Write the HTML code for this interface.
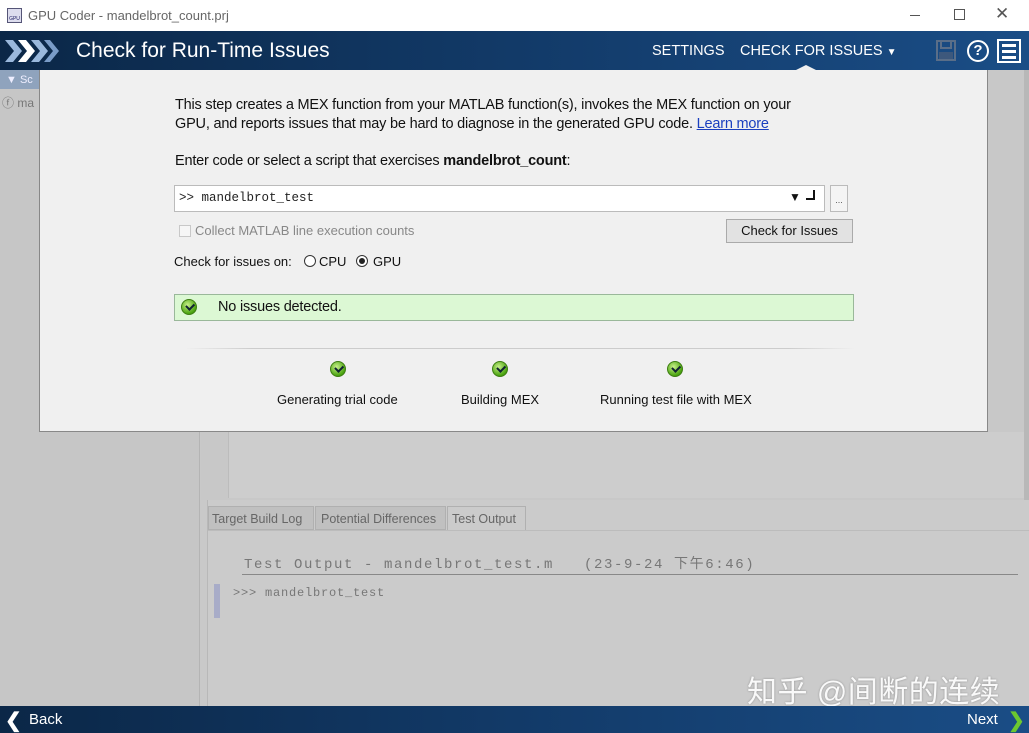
<!DOCTYPE html>
<html><head><meta charset="utf-8"><style>
*{box-sizing:border-box;margin:0;padding:0}
body{width:1029px;height:733px;overflow:hidden;position:relative;background:#c9c9c9;font-family:"Liberation Sans","Noto Sans CJK SC",sans-serif;}
.abs{position:absolute}
#title{left:0;top:0;width:1029px;height:31px;background:#fff;}
#title .t{left:28px;top:8px;font-size:13px;color:#666}
#hdr{left:0;top:31px;width:1029px;height:39px;background:linear-gradient(90deg,#0b2747 0%,#123a68 50%,#1a4d86 100%);}
#side{left:0;top:70px;width:200px;height:636px;background:#c6c6c6;border-right:1px solid #b4b4b4}
#dlg{left:39px;top:70px;width:949px;height:362px;background:#f0f0f0;border:1px solid #888;border-top:none}
.txt{font-size:14.5px;color:#111;letter-spacing:-0.2px}
.chk{width:16px;height:16px;border-radius:50%;background:radial-gradient(circle at 40% 35%,#c8f08a,#4aa30f 70%,#2e7a08);border:1px solid #3d7d12}
.chk:after{content:"";position:absolute;left:4px;top:3px;width:6px;height:3.5px;border-left:2px solid #123;border-bottom:2px solid #123;transform:rotate(-45deg)}
#bot{left:0;top:706px;width:1029px;height:27px;background:linear-gradient(90deg,#0b2747,#123a68 50%,#1a4d86);}
.mono{font-family:"Liberation Mono","Noto Sans CJK SC",monospace}
</style></head><body>
<div id="title" class="abs">
 <div class="abs" style="left:7px;top:8px;width:15px;height:15px;border:1px solid #557;background:#dde;font-size:5px;color:#226;text-align:center;line-height:20px">GPU</div>
 <div class="abs t">GPU Coder - mandelbrot_count.prj</div>
 <div class="abs" style="left:910px;top:15px;width:10px;height:1px;background:#555"></div>
 <div class="abs" style="left:954px;top:9px;width:11px;height:11px;border:1px solid #555"></div>
 <div class="abs" style="left:995px;top:4px;font-size:17px;color:#555">✕</div>
</div>
<div id="hdr" class="abs">
 <svg class="abs" style="left:5px;top:9px" width="54" height="22" viewBox="0 0 54 22">
  <polygon points="0,0 8,0 17,11 8,22 0,22 9,11" fill="#9ab8dc"/>
  <polygon points="13,0 21,0 30,11 21,22 13,22 22,11" fill="#fff"/>
  <polygon points="26,0 34,0 43,11 34,22 26,22 35,11" fill="#9ab8dc"/>
  <polygon points="39,0 45,0 54,11 45,22 39,22 48,11" fill="#7a9cc8"/>
 </svg>
 <div class="abs" style="left:76px;top:8px;font-size:21px;color:#fff">Check for Run-Time Issues</div>
 <div class="abs" style="left:652px;top:12px;font-size:14.5px;color:#fff">SETTINGS</div>
 <div class="abs" style="left:740px;top:12px;font-size:14.5px;color:#fff">CHECK FOR ISSUES <span style="font-size:10px">▼</span></div>
 <div class="abs" style="left:796px;top:34px;width:0;height:0;border-left:10px solid transparent;border-right:10px solid transparent;border-bottom:5px solid #f0f0f0"></div>
 <div class="abs" style="left:936px;top:9px;width:20px;height:21px;border:2px solid #5a6e88"><div style="margin:0 2px;height:7px;border:2px solid #5a6e88;border-top:none"></div><div style="margin:3px 1px 0;height:7px;background:#3d587c"></div></div>
 <div class="abs" style="left:967px;top:9px;width:22px;height:22px;border:2px solid #fff;border-radius:50%;color:#fff;font-weight:bold;font-size:15px;text-align:center;line-height:18px">?</div>
 <div class="abs" style="left:997px;top:8px;width:24px;height:24px;border:2px solid #fff;padding:3px 3px"><div style="height:3px;background:#fff;margin-bottom:3px"></div><div style="height:3px;background:#fff;margin-bottom:3px"></div><div style="height:3px;background:#fff"></div></div>
</div>
<div id="side" class="abs">
 <div class="abs" style="left:0;top:0;width:40px;height:19px;background:#8fa3bd"></div>
 <div class="abs" style="left:6px;top:4px;font-size:11px;color:#eef">▼ Sc</div>
 <div class="abs" style="left:2px;top:24px;font-size:12px;color:#777">ⓕ ma</div>
</div>
<div class="abs" style="left:201px;top:70px;width:828px;height:430px;background:#c8c8c8"></div>
<div class="abs" style="left:228px;top:432px;width:801px;height:66px;background:#cdcdcd;border-left:1px solid #bcbcbc"></div>
<div class="abs" style="left:1024px;top:70px;width:5px;height:636px;background:#b8b8b8"></div>
<div class="abs" style="left:207px;top:500px;width:822px;height:206px;background:#cbcbcb;border-left:1px solid #b8b8b8"></div>
<div class="abs" style="left:208px;top:506px;width:106px;height:24px;background:#c0c0c0;border:1px solid #b0b0b0;font-size:12.5px;color:#666;padding:5px 3px">Target Build Log</div>
<div class="abs" style="left:315px;top:506px;width:131px;height:24px;background:#c0c0c0;border:1px solid #b0b0b0;font-size:12.5px;color:#666;padding:5px 5px">Potential Differences</div>
<div class="abs" style="left:447px;top:506px;width:79px;height:24px;background:#cbcbcb;border:1px solid #b0b0b0;border-bottom:none;font-size:12.5px;color:#666;padding:5px 4px">Test Output</div>
<div class="abs" style="left:208px;top:530px;width:821px;height:1px;background:#bcbcbc"></div>
<div class="abs mono" style="left:244px;top:553px;font-size:14px;letter-spacing:1.6px;color:#777;white-space:pre">Test Output - mandelbrot_test.m   (23-9-24 下午6:46)</div>
<div class="abs" style="left:242px;top:574px;width:776px;height:1px;background:#888"></div>
<div class="abs" style="left:214px;top:584px;width:6px;height:34px;background:#a8acc8"></div>
<div class="abs mono" style="left:233px;top:586px;font-size:12px;letter-spacing:0.8px;color:#777">&gt;&gt;&gt; mandelbrot_test</div>
<div class="abs" style="left:747px;top:667px;font-size:30px;color:#fff;opacity:.9;text-shadow:0 0 2px #888;letter-spacing:0.5px">知乎 @间断的连续</div>
<div id="dlg" class="abs">
 <div class="abs txt" style="left:135px;top:26px;line-height:19px;width:650px">This step creates a MEX function from your MATLAB function(s), invokes the MEX function on your GPU, and reports issues that may be hard to diagnose in the generated GPU code. <span style="color:#1a3fbf;text-decoration:underline">Learn more</span></div>
 <div class="abs txt" style="left:135px;top:83px">Enter code or select a script that exercises <b>mandelbrot_count</b>:</div>
 <div class="abs" style="left:134px;top:115px;width:651px;height:27px;background:#fff;border:1px solid #bbb"></div>
 <div class="abs mono" style="left:139px;top:121px;font-size:12.5px;color:#222">&gt;&gt;  mandelbrot_test</div>
 <div class="abs" style="left:749px;top:120px;font-size:12px;color:#111">▼</div>
 <div class="abs" style="left:766px;top:120px;width:9px;height:10px;border-right:2px solid #111;border-bottom:2px solid #111"></div>
 <div class="abs" style="left:790px;top:115px;width:18px;height:27px;background:#f4f4f4;border:1px solid #bbb;font-size:9px;color:#555;text-align:center;line-height:28px">...</div>
 <div class="abs" style="left:139px;top:155px;width:12px;height:12px;border:1px solid #c8c8c8;background:#f6f6f6"></div>
 <div class="abs" style="left:155px;top:153px;font-size:13px;color:#888">Collect MATLAB line execution counts</div>
 <div class="abs" style="left:686px;top:149px;width:127px;height:24px;background:#e2e2e2;border:1px solid #aaa;font-size:13px;color:#111;text-align:center;line-height:22px">Check for Issues</div>
 <div class="abs" style="left:134px;top:184px;font-size:13px;color:#111">Check for issues on:</div>
 <div class="abs" style="left:264px;top:185px;width:12px;height:12px;border:1px solid #333;border-radius:50%;background:#fff"></div>
 <div class="abs" style="left:279px;top:184px;font-size:13px;color:#111">CPU</div>
 <div class="abs" style="left:316px;top:185px;width:12px;height:12px;border:1px solid #333;border-radius:50%;background:#fff"><div style="margin:2px;width:6px;height:6px;border-radius:50%;background:#222"></div></div>
 <div class="abs" style="left:333px;top:184px;font-size:13px;color:#111">GPU</div>
 <div class="abs" style="left:134px;top:224px;width:680px;height:27px;background:#dcf8d4;border:1px solid #9ab89a"></div>
 <div class="abs chk" style="left:141px;top:229px"></div>
 <div class="abs txt" style="left:178px;top:229px">No issues detected.</div>
 <div class="abs" style="left:145px;top:278px;width:670px;height:1px;background:linear-gradient(90deg,transparent,#ccc 10%,#ccc 90%,transparent)"></div>
 <div class="abs chk" style="left:290px;top:291px"></div>
 <div class="abs chk" style="left:452px;top:291px"></div>
 <div class="abs chk" style="left:627px;top:291px"></div>
 <div class="abs" style="left:237px;top:322px;font-size:13px;color:#111">Generating trial code</div>
 <div class="abs" style="left:421px;top:322px;font-size:13px;color:#111">Building MEX</div>
 <div class="abs" style="left:560px;top:322px;font-size:13px;color:#111">Running test file with MEX</div>
</div>
<div id="bot" class="abs">
 <div class="abs" style="left:5px;top:2px;font-size:20px;color:#fff;font-weight:bold">❮</div>
 <div class="abs" style="left:29px;top:5px;font-size:15px;color:#fff">Back</div>
 <div class="abs" style="left:967px;top:5px;font-size:15px;color:#fff">Next</div>
 <div class="abs" style="left:1008px;top:2px;font-size:20px;color:#6cc830;font-weight:bold">❯</div>
</div>
</body></html>
